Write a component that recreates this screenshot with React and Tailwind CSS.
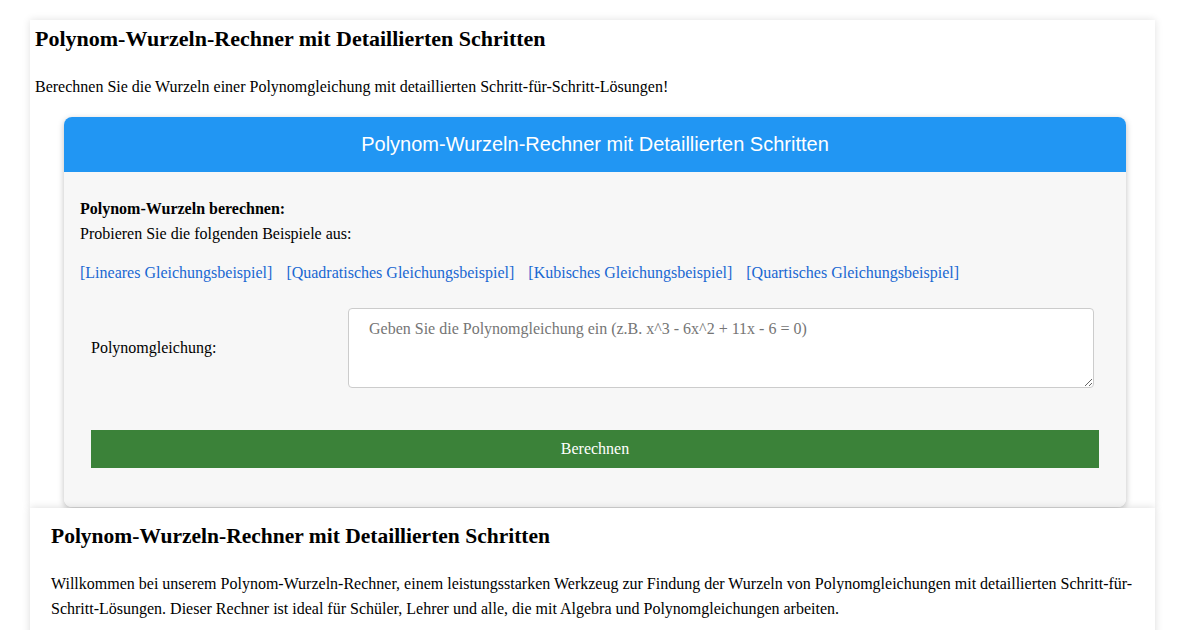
import React from "react";

const serif = { fontFamily: '"Liberation Serif", "Times New Roman", serif' };

const examples = [
  "[Lineares Gleichungsbeispiel]",
  "[Quadratisches Gleichungsbeispiel]",
  "[Kubisches Gleichungsbeispiel]",
  "[Quartisches Gleichungsbeispiel]",
];

export default function App() {
  return (
    <div
      className="h-[630px] overflow-y-scroll bg-white text-black [&::-webkit-scrollbar]:w-[15px] [&::-webkit-scrollbar-track]:bg-[#f1f1f1] [&::-webkit-scrollbar-thumb]:bg-[#c1c1c1] [&::-webkit-scrollbar-thumb]:border-x-[2px] [&::-webkit-scrollbar-thumb]:border-solid [&::-webkit-scrollbar-thumb]:border-[#f1f1f1] [&::-webkit-scrollbar-button:single-button:vertical:decrement]:block [&::-webkit-scrollbar-button:single-button:vertical:decrement]:h-[15px] [&::-webkit-scrollbar-button:single-button:vertical:decrement]:bg-[#f1f1f1] [&::-webkit-scrollbar-button:single-button:vertical:increment]:block [&::-webkit-scrollbar-button:single-button:vertical:increment]:h-[15px] [&::-webkit-scrollbar-button:single-button:vertical:increment]:bg-[#f1f1f1]"
      style={serif}
    >
      <div className="pt-[20px] pl-[30px] w-[1155px] pb-[40px] min-h-[2230px]">
        {/* intro block with the calculator */}
        <div className="bg-white shadow-[0_0_8px_rgba(0,0,0,0.12)] px-[5px] pt-[5px] pb-[1px]">
          <h1 className="text-[22px] font-bold leading-[28px] m-0">
            Polynom-Wurzeln-Rechner mit Detaillierten Schritten
          </h1>
          <p className="text-[16px] leading-[18px] mt-[25px] mb-[21px]">
            Berechnen Sie die Wurzeln einer Polynomgleichung mit detaillierten Schritt-für-Schritt-Lösungen!
          </p>

          <div className="ml-[29px] w-[1062px] rounded-[8px] overflow-hidden shadow-[0_2px_6px_rgba(0,0,0,0.25)]">
            <div
              className="bg-[#2196f3] text-white h-[55px] pb-[2px] flex items-center justify-center text-[20px]"
              style={{ fontFamily: '"Liberation Sans", Arial, sans-serif' }}
            >
              Polynom-Wurzeln-Rechner mit Detaillierten Schritten
            </div>
            <div className="bg-[#f7f7f7] px-[16px] pt-[24px] pb-[39px]">
              <div className="text-[16px] leading-[25px] font-bold">Polynom-Wurzeln berechnen:</div>
              <div className="text-[16px] leading-[25px]">Probieren Sie die folgenden Beispiele aus:</div>
              <div className="flex gap-[14px] mt-[14px] text-[16px] leading-[25px]">
                {examples.map((e) => (
                  <a key={e} href="#" className="text-[#1967d2] no-underline">
                    {e}
                  </a>
                ))}
              </div>

              <div className="px-[11px] mt-[23px]">
                <div className="flex items-center">
                  <label className="w-[257px] text-[16px] leading-[18px]">Polynomgleichung:</label>
                  <textarea
                    className="w-[746px] h-[80px] bg-white border border-[#cccccc] rounded-[4px] pt-[10px] px-[20px] text-[16px] leading-[20px] placeholder:text-[#757575] outline-none"
                    style={serif}
                    placeholder="Geben Sie die Polynomgleichung ein (z.B. x^3 - 6x^2 + 11x - 6 = 0)"
                  />
                </div>
                <button
                  className="mt-[42px] w-full h-[38px] bg-[#3b8239] text-white text-[16px]"
                  style={serif}
                >
                  Berechnen
                </button>
              </div>
            </div>
          </div>
        </div>

        {/* article section */}
        <div className="bg-white shadow-[0_0_8px_rgba(0,0,0,0.15)] px-[21px] pt-[14px] pb-[20px]">
          <h2 className="text-[21.5px] font-bold leading-[28px] m-0">
            Polynom-Wurzeln-Rechner mit Detaillierten Schritten
          </h2>
          <p className="text-[16px] leading-[25px] mt-[21px]">
            Willkommen bei unserem Polynom-Wurzeln-Rechner, einem leistungsstarken Werkzeug zur Findung der Wurzeln von Polynomgleichungen mit detaillierten Schritt-für-Schritt-Lösungen. Dieser Rechner ist ideal für Schüler, Lehrer und alle, die mit Algebra und Polynomgleichungen arbeiten.
          </p>
          <p className="text-[16px] leading-[25px] mt-[16px]">
            Geben Sie einfach Ihre Gleichung ein und klicken Sie auf „Berechnen“, um alle reellen und komplexen Wurzeln zu erhalten.
          </p>
        </div>
      </div>
    </div>
  );
}
